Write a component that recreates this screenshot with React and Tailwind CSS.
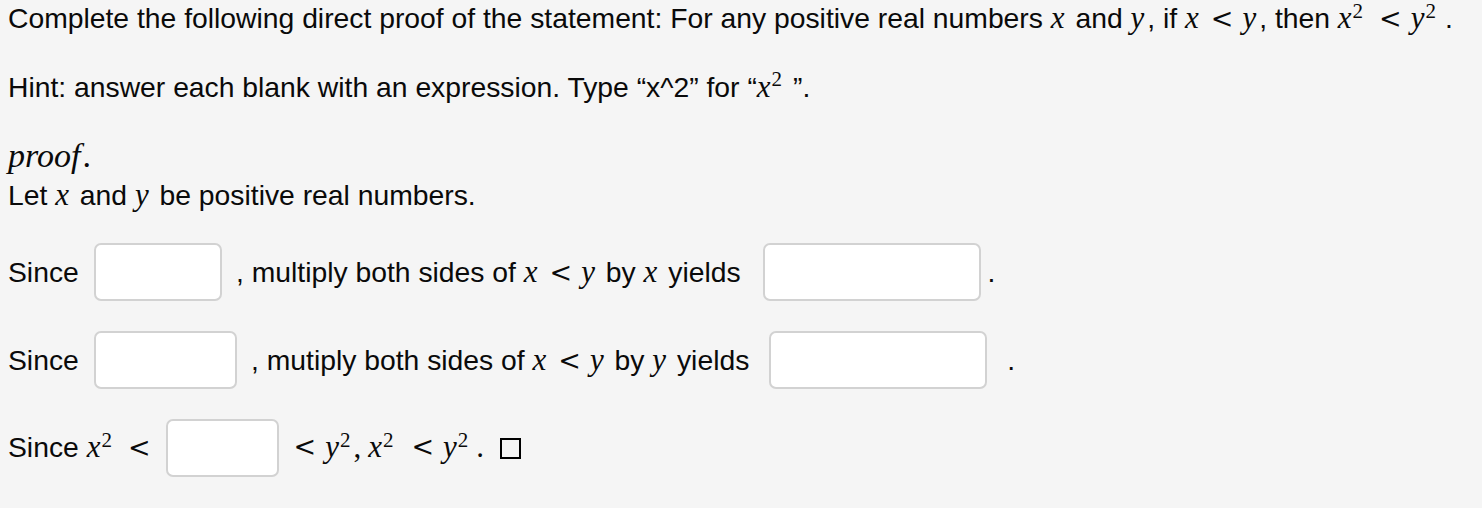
import React from "react";

const SERIF = { fontFamily: '"Liberation Serif", serif' };
const DJ = { fontFamily: '"DejaVu Serif", serif' };

const I = ({ children }) => (
  <span className="italic text-[31px] pr-[3px]" style={SERIF}>{children}</span>
);
const Lt = () => (
  <span className="text-[27px] px-[9px]" style={DJ}>&lt;</span>
);
const Sq = ({ v }) => (
  <span className="italic text-[31px] pr-[3px]" style={SERIF}>
    {v}
    <sup className="not-italic text-[21px] ml-[1px]">2</sup>
  </span>
);
const Box = ({ w }) => (
  <div className={`h-[58px] ${w} bg-white border-2 border-[#d2d2d2] rounded-[7px] shrink-0`} />
);

export default function App() {
  return (
    <div
      className="w-[1482px] h-[508px] bg-[#f5f5f5] text-[#0a0a0a] pl-[8px] text-[28.3px] overflow-hidden"
      style={{ fontFamily: '"Liberation Sans", Arial, sans-serif' }}
    >
      <div className="h-[36px] flex items-end whitespace-nowrap">
        <span className="leading-[34px]">
          Complete the following direct proof of the statement: For any positive real numbers <I>x</I> and <I>y</I>, if{" "}
          <I>x</I>
          <Lt />
          <I>y</I>, then <Sq v="x" />
          <span className="px-[2px]" />
          <Lt />
          <Sq v="y" />
          <span className="ml-[6px]">.</span>
        </span>
      </div>
      <div className="h-[34px] mt-[34px] flex items-center whitespace-nowrap">
        <span>
          Hint: answer each blank with an expression. Type “x^2” for “<Sq v="x" /> ”.
        </span>
      </div>
      <div className="h-[34px] mt-[34px] flex items-center">
        <span className="italic text-[34px]" style={SERIF}>
          proof<span className="not-italic ml-[2px]">.</span>
        </span>
      </div>
      <div className="h-[34px] mt-[6px] flex items-center whitespace-nowrap">
        <span>
          Let <I>x</I> and <I>y</I> be positive real numbers.
        </span>
      </div>

      <div className="h-[58px] mt-[31px] flex items-center whitespace-nowrap">
        <span className="w-[86px] shrink-0">Since</span>
        <Box w="w-[128px]" />
        <span className="ml-[14px]">
          , multiply both sides of <I>x</I>
          <Lt />
          <I>y</I> by <I>x</I> yields
        </span>
        <div className="ml-[22px]">
          <Box w="w-[218px]" />
        </div>
        <span className="ml-[7px]">.</span>
      </div>

      <div className="h-[58px] mt-[30px] flex items-center whitespace-nowrap">
        <span className="w-[86px] shrink-0">Since</span>
        <Box w="w-[143px]" />
        <span className="ml-[14px]">
          , mutiply both sides of <I>x</I>
          <Lt />
          <I>y</I> by <I>y</I> yields
        </span>
        <div className="ml-[20px]">
          <Box w="w-[218px]" />
        </div>
        <span className="ml-[20px]">.</span>
      </div>

      <div className="h-[59px] mt-[29px] flex items-center whitespace-nowrap">
        <span>
          Since <Sq v="x" />
          <span className="px-[2px]" />
          <Lt />
        </span>
        <div className="ml-[6px]">
          <Box w="w-[113px]" />
        </div>
        <span className="ml-[6px] flex items-center">
          <Lt />
          <Sq v="y" />
          <span className="text-[31px] mr-[7px]" style={SERIF}>,</span>
          <Sq v="x" />
          <span className="px-[3px]" />
          <Lt />
          <Sq v="y" />
          <span className="ml-[5px] text-[31px]" style={SERIF}>.</span>
          <span className="inline-block w-[21px] h-[21px] border-2 border-black ml-[16px] mt-[2px]" />
        </span>
      </div>
    </div>
  );
}
